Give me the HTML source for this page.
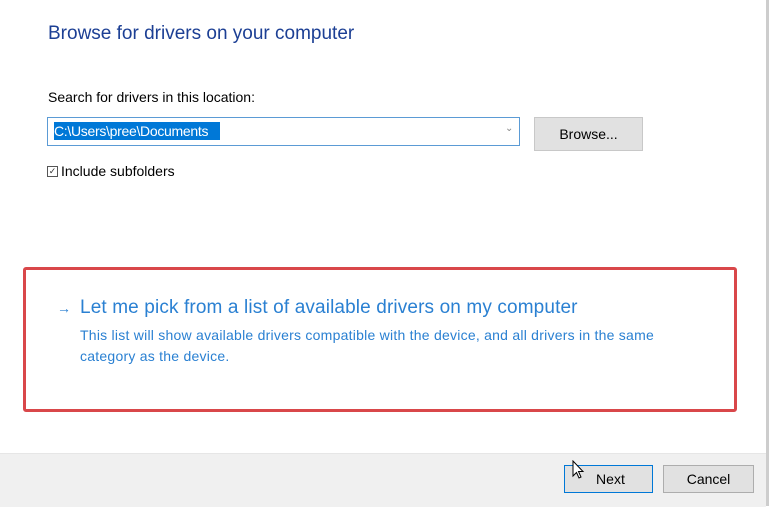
<!DOCTYPE html>
<html><head><style>
body{margin:0;width:769px;height:506px;overflow:hidden;background:#fff;font-family:"Liberation Sans",sans-serif;position:relative}
.a{position:absolute;white-space:nowrap}
</style></head><body>
<div class="a" style="right:0;top:0;width:3px;height:506px;background:#cdcdcd"></div>
<div class="a" style="left:48px;top:23px;font-size:19px;color:#1c3f94">Browse for drivers on your computer</div>
<div class="a" style="left:48px;top:89px;font-size:14px;color:#000">Search for drivers in this location:</div>
<div class="a" style="left:47px;top:117px;width:471px;height:27px;border:1px solid #5b9bd5;background:#fff"></div>
<div class="a" style="left:54px;top:122px;height:18px;width:166px;background:#0078d7;color:#fff;font-size:14px;line-height:18px;letter-spacing:-0.3px">C:\Users\pree\Documents</div>
<div class="a" style="left:505px;top:123px;font-size:10px;color:#888">&#8964;</div>
<div class="a" style="left:534px;top:117px;width:107px;height:32px;border:1px solid #c8c8c8;background:#e1e1e1;font-size:14px;line-height:32px;text-align:center;color:#000">Browse...</div>
<div class="a" style="left:47px;top:166px;width:9px;height:9px;border:1px solid #555;font-size:9px;line-height:9px;text-align:center;color:#333">&#10003;</div>
<div class="a" style="left:61px;top:163px;font-size:14px;color:#000">Include subfolders</div>
<div class="a" style="left:23px;top:267px;width:708px;height:139px;border:3px solid #d9474a;border-radius:3px"></div>
<div class="a" style="left:57px;top:300px;font-size:14px;color:#2a80d2">&#8594;</div>
<div class="a" style="left:80px;top:297px;font-size:19px;letter-spacing:0.13px;color:#2a80d2">Let me pick from a list of available drivers on my computer</div>
<div class="a" style="left:80px;top:325px;font-size:14px;letter-spacing:0.24px;color:#2a80d2;line-height:21px">This list will show available drivers compatible with the device, and all drivers in the same<br>category as the device.</div>
<div class="a" style="left:0;top:453px;width:766px;height:53px;background:#f0f0f0;border-top:1px solid #e6e6e6"></div>
<div class="a" style="left:564px;top:465px;width:87px;height:26px;border:1px solid #0078d7;background:#e1e1e1;font-size:14px;line-height:26px;text-align:center;color:#000">&nbsp;Next</div>
<div class="a" style="left:663px;top:465px;width:89px;height:26px;border:1px solid #adadad;background:#e1e1e1;font-size:14px;line-height:26px;text-align:center;color:#000">Cancel</div>
<svg class="a" style="left:572px;top:460px" width="14" height="22" viewBox="0 0 14 22"><path d="M1 1 L1 16 L4.5 12.5 L7 18 L9 17 L6.5 11.5 L11 11.5 Z" fill="#fff" stroke="#000" stroke-width="1"/></svg>
</body></html>
